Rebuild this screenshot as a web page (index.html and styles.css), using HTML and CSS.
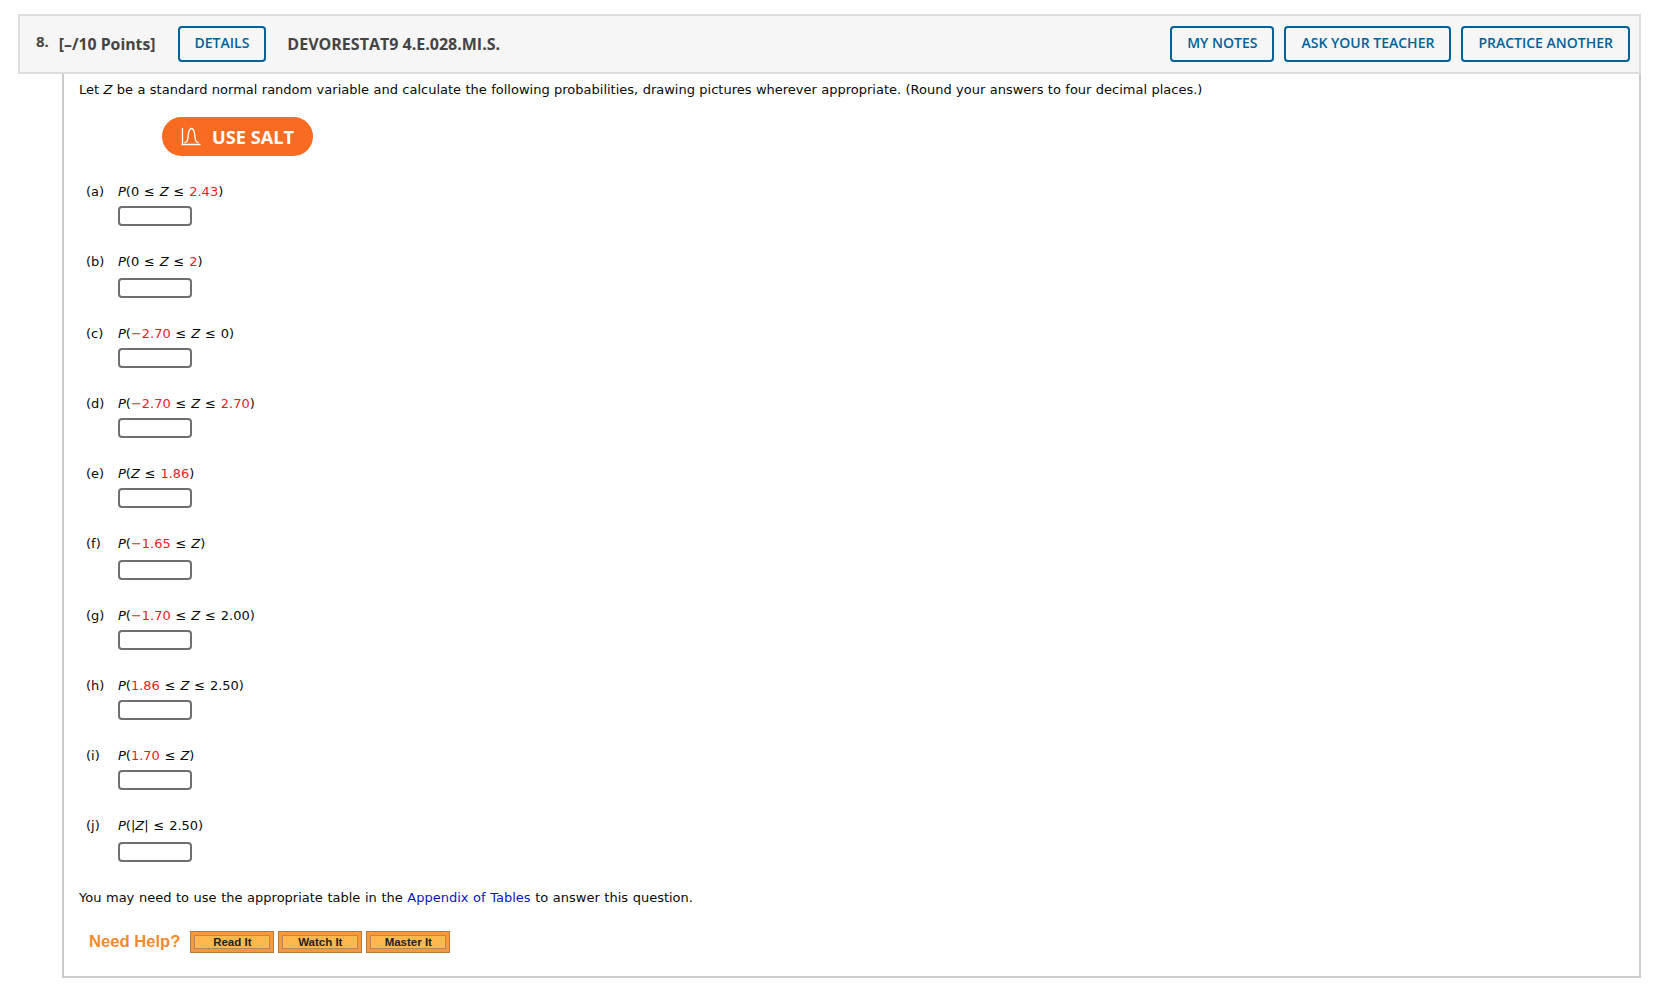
FILE: index.html
```html
<!DOCTYPE html>
<html>
<head>
    <meta charset="utf-8">
    <title>Question 8</title>
    <link rel="stylesheet" href="styles.css">
</head>
<body>
<div class="question">
    <div class="header">
        <span class="num">8.</span>
        <span class="points">[&ndash;/10 Points]</span>
        <a class="btn details">DETAILS</a>
        <span class="code">DEVORESTAT9 4.E.028.MI.S.</span>
        <div class="actions">
            <a class="btn">MY NOTES</a>
            <a class="btn">ASK YOUR TEACHER</a>
            <a class="btn">PRACTICE ANOTHER</a>
        </div>
    </div>
    <div class="content">
        <p class="intro">Let <i>Z</i> be a standard normal random variable and calculate the following probabilities, drawing pictures wherever appropriate. (Round your answers to four decimal places.)</p>
        <a class="salt">
            <svg class="salt-icon" viewBox="0 0 20 20" width="20" height="20">
                <path d="M1.500 1v16M0.500 17.500h19" fill="none" stroke="#fff" stroke-width="1.300"/>
                <path d="M3.500 15.500C6 15.500 6.500 14 7 10C7.400 6 7.500 1.500 10.500 1.500C13.500 1.500 13.600 6 14 10C14.500 14 15 15.500 17.500 15.500" fill="none" stroke="#fff" stroke-width="1.300"/>
            </svg>
            USE SALT
        </a>
        <div class="part"><div class="line"><span class="tag">(a)</span><span><i>P</i>(0 &le; <i>Z</i> &le; <span class="red">2.43</span>)</span></div><input class="answer" type="text"></div>
        <div class="part wide"><div class="line"><span class="tag">(b)</span><span><i>P</i>(0 &le; <i>Z</i> &le; <span class="red">2</span>)</span></div><input class="answer" type="text"></div>
        <div class="part"><div class="line"><span class="tag">(c)</span><span><i>P</i>(<span class="red">&minus;2.70</span> &le; <i>Z</i> &le; 0)</span></div><input class="answer" type="text"></div>
        <div class="part"><div class="line"><span class="tag">(d)</span><span><i>P</i>(<span class="red">&minus;2.70</span> &le; <i>Z</i> &le; <span class="red">2.70</span>)</span></div><input class="answer" type="text"></div>
        <div class="part"><div class="line"><span class="tag">(e)</span><span><i>P</i>(<i>Z</i> &le; <span class="red">1.86</span>)</span></div><input class="answer" type="text"></div>
        <div class="part wide"><div class="line"><span class="tag">(f)</span><span><i>P</i>(<span class="red">&minus;1.65</span> &le; <i>Z</i>)</span></div><input class="answer" type="text"></div>
        <div class="part"><div class="line"><span class="tag">(g)</span><span><i>P</i>(<span class="red">&minus;1.70</span> &le; <i>Z</i> &le; 2.00)</span></div><input class="answer" type="text"></div>
        <div class="part"><div class="line"><span class="tag">(h)</span><span><i>P</i>(<span class="red">1.86</span> &le; <i>Z</i> &le; 2.50)</span></div><input class="answer" type="text"></div>
        <div class="part"><div class="line"><span class="tag">(i)</span><span><i>P</i>(<span class="red">1.70</span> &le; <i>Z</i>)</span></div><input class="answer" type="text"></div>
        <div class="part wide"><div class="line"><span class="tag">(j)</span><span><i>P</i>(|<i>Z</i>| &le; 2.50)</span></div><input class="answer" type="text"></div>
        <p class="note">You may need to use the appropriate table in the <a class="link">Appendix of Tables</a> to answer this question.</p>
        <div class="help">
            <span class="help-label">Need Help?</span>
            <a class="help-btn">Read It</a>
            <a class="help-btn">Watch It</a>
            <a class="help-btn">Master It</a>
        </div>
    </div>
</div>
</body>
</html>
```

FILE: styles.css
```css
*
{
  box-sizing: border-box;
}

body
{
  margin: 0;
  background: #fff;
  font-family: "DejaVu Sans", sans-serif;
  font-size: 13px;
  color: #0a0a0a;
}

.question
{
  padding: 14px 13px 0 18px;
}

.header
{
  display: flex;
  align-items: center;
  height: 60px;
  padding: 0 9px 0 16px;
  background: #f6f6f6;
  border: 2px solid #ddd;
  font-family: "Open Sans", sans-serif;
  font-weight: 600;
  color: #444;
}

.num
{
  font-size: 15px;
  font-weight: 700;
  margin-right: 10px;
  margin-top: -6px;
}

.points
{
  font-size: 15.800px;
  font-weight: 700;
  margin: -1px 22px 0 0;
}

.code
{
  font-size: 16px;
  font-weight: 700;
  margin-left: 21px;
}

.btn
{
  display: inline-block;
  height: 36px;
  line-height: 30px;
  padding: 0 15px;
  border: 2px solid #00629b;
  border-radius: 4px;
  color: #00629b;
  font-size: 14px;
  font-weight: 600;
  background: #f6f6f6;
}

.actions
{
  display: flex;
  gap: 10px;
  margin-left: auto;
}

.content
{
  margin-left: 44px;
  height: 904px;
  padding: 8px 15px 0;
  border: 2px solid #ccc;
  border-top: 0;
}

.intro
{
  margin: 0;
  line-height: 16px;
  word-spacing: 0.260px;
}

.salt
{
  display: flex;
  align-items: center;
  gap: 11px;
  width: 151px;
  height: 39px;
  margin: 19px 0 0 83px;
  padding-left: 19px;
  background: #f96b21;
  border-radius: 20px;
  color: #fff;
  font-family: "Open Sans", sans-serif;
  font-size: 18.200px;
  font-weight: 700;
}

.salt-icon
{
  flex: none;
}

.part
{
  height: 70px;
  padding-left: 7px;
}

.part.wide
{
  height: 72px;
}

.salt + .part
{
  margin-top: 28px;
}

.line
{
  display: flex;
  height: 16px;
  line-height: 16px;
  word-spacing: 0.700px;
}

.tag
{
  width: 32px;
}

.red
{
  color: #f01a24;
}

.answer
{
  display: block;
  width: 74px;
  height: 20px;
  margin: 6px 0 0 32px;
  background: #fff;
  border: 2px solid #6f6f6f;
  border-radius: 4px;
}

.wide .answer
{
  margin-top: 8px;
}

.note
{
  margin: 0;
  line-height: 16px;
  word-spacing: 0.450px;
}

.link
{
  color: #0a14c8;
}

.help
{
  display: flex;
  align-items: center;
  margin: 25px 0 0 10px;
}

.help-label
{
  font-family: "Liberation Sans", sans-serif;
  font-size: 16.600px;
  font-weight: 700;
  color: #f28a2e;
  margin-right: 10px;
}

.help-btn
{
  width: 84px;
  height: 22px;
  margin-right: 4px;
  line-height: 16px;
  text-align: center;
  background: #ffb84d;
  border: 1px solid #b87a3a;
  box-shadow: inset 0 0 0 3px #f5993c, inset 0 0 0 4px #b08a5a;
  font-family: "Liberation Sans", sans-serif;
  font-size: 11.500px;
  font-weight: 700;
  color: #222;
  padding-top: 2px;
}
```
